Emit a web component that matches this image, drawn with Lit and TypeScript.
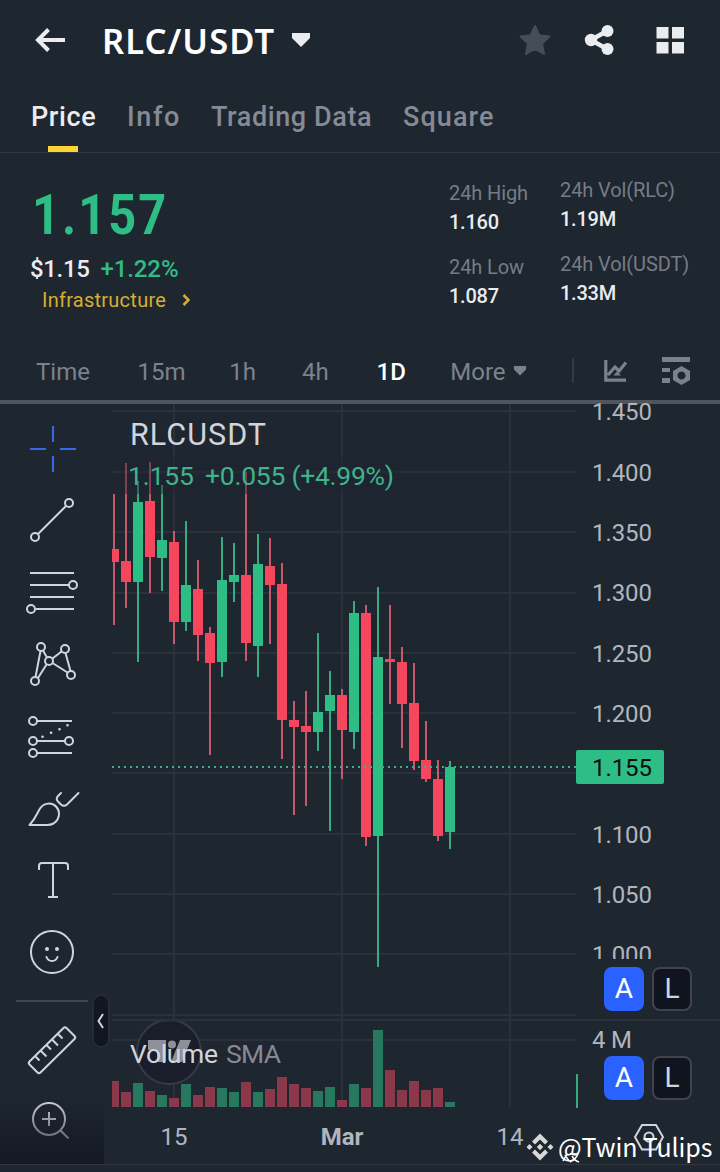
import { LitElement, html, svg, css } from "lit";
import { customElement } from "lit/decorators.js";

const UP = "#2ebd85";
const DOWN = "#f6465d";

// x centre, high, low, body top, body bottom, rising?, volume top
type Candle = [number, number, number, number, number, boolean, number];
const CANDLES: Candle[] = [
  [114, 494, 625, 549, 562, false, 1081],
  [126, 463, 608, 561, 582, false, 1092],
  [138, 481, 662, 502, 582, true, 1083],
  [150, 462, 593, 501, 557, false, 1091],
  [162, 485, 591, 540, 558, true, 1095],
  [174, 531, 644, 542, 622, false, 1098],
  [186, 521, 631, 585, 622, true, 1084],
  [198, 560, 661, 589, 635, false, 1095],
  [210, 627, 755, 633, 663, false, 1087],
  [222, 537, 677, 580, 662, true, 1088],
  [234, 543, 602, 575, 582, true, 1092],
  [246, 472, 661, 575, 643, false, 1082],
  [258, 534, 677, 564, 646, true, 1092],
  [270, 538, 644, 566, 585, false, 1089],
  [282, 563, 759, 584, 720, false, 1077],
  [294, 701, 815, 720, 727, false, 1084],
  [306, 691, 806, 726, 732, false, 1088],
  [318, 633, 751, 712, 732, true, 1091],
  [330, 671, 831, 695, 711, true, 1087],
  [342, 689, 779, 695, 730, false, 1100],
  [354, 601, 749, 613, 732, true, 1084],
  [366, 605, 846, 613, 837, false, 1088],
  [378, 587, 967, 657, 836, true, 1030],
  [390, 605, 704, 659, 662, false, 1070],
  [402, 647, 748, 662, 704, false, 1090],
  [414, 663, 770, 703, 761, false, 1081],
  [426, 721, 782, 760, 779, false, 1090],
  [438, 760, 841, 779, 836, false, 1088],
  [450, 761, 849, 767, 832, true, 1102],
];

const H_GRID = [411, 472, 532, 593, 653, 713, 773, 834, 894, 954, 1015, 1040];
const V_GRID = [174, 342, 510];
const PRICES: [string, number][] = [
  ["1.450", 420], ["1.400", 481], ["1.350", 541], ["1.300", 601],
  ["1.250", 662], ["1.200", 722], ["1.100", 843], ["1.050", 903], ["1.000", 963],
];

@customElement("price-chart")
class PriceChart extends LitElement {
  static styles = css`
    :host { display: block; position: relative; width: 616px; height: 760px; }
    svg { display: block; overflow: visible; }
    text { font-family: Roboto, sans-serif; }
    .axis { font-size: 24px; fill: #b2b5be; }
    .bold { font-weight: 700; }
    .symbol { font-size: 30.5px; fill: #d1d4dc; }
    .change { font-size: 26.5px; fill: #3fb488; }
    .pane { font-size: 26.5px; fill: #d1d4dc; }
    .muted { fill: #868993; }
    .current { fill: #0b0e11; }
    .scales { position: absolute; left: 500px; display: flex; gap: 8px; }
    .upper { top: 563px; }
    .lower { top: 652px; }
    .scale {
      box-sizing: border-box; width: 40px; height: 44px; border: 2px solid #40434d;
      border-radius: 8px; background: #10141f; color: #d1d4dc; padding: 0;
      font: 28px/40px Roboto, sans-serif; text-align: center;
    }
    .on { background: #2962ff; border-color: #2962ff; color: #fff; }
  `;

  render() {
    return html`
      <svg width="616" height="760" viewBox="104 404 616 760">
        <defs>
          <clipPath id="plot"><rect x="112" y="404" width="464" height="703" /></clipPath>
          <clipPath id="lastTick"><rect x="576" y="930" width="144" height="29" /></clipPath>
          <clipPath id="volumePane"><rect x="112" y="1020" width="464" height="88" /></clipPath>
        </defs>
        ${H_GRID.map((y) => svg`<rect x="112" y=${y - 1} width="464" height="2" fill="#2a313b" />`)}
        ${V_GRID.map((x) => svg`<rect x=${x - 1} y="404" width="2" height="703" fill="#2a313b" />`)}
        <rect x="112" y="1019" width="608" height="2" fill="#2a313b" />
        <g clip-path="url(#volumePane)">
          <circle cx="169" cy="1052" r="32" fill="#1a1e2a" stroke="#373b46" stroke-width="2" />
          <path d="M148 1040h18v22h-9v-12h-9zM180 1040h11l-9 22h-11z" fill="#8e9099" />
          <circle cx="172" cy="1044.500" r="4" fill="#8e9099" />
          <rect x="152" y="1020" width="34" height="1.500" fill="#2a313b" />
        </g>
        <g clip-path="url(#plot)">
          ${CANDLES.map(([x, hi, lo, top, bot, up, vol]) => svg`
            <rect x=${x - 5} y=${vol} width="10" height=${1107 - vol} fill=${up ? "#28775f" : "#8b394a"} />
            <rect x=${x - 1} y=${hi} width="2" height=${lo - hi} fill=${up ? "#38ac80" : "#c9586b"} />
            <rect x=${x - 5} y=${top} width="10" height=${bot - top} fill=${up ? UP : DOWN} />`)}
        </g>
        <rect x="120" y="456" width="280" height="38" fill="#1e2630" opacity="0.45" />
        <line x1="112" y1="767" x2="576" y2="767" stroke="#3fae86" stroke-width="2" stroke-dasharray="2 4" />
        <rect x="576" y="1074" width="2" height="34" fill="#38ac80" />
        <text class="symbol" x="130" y="445" textLength="136">RLCUSDT</text>
        <text class="change" x="128" y="485" textLength="66">1.155</text>
        <text class="change" x="205" y="485" textLength="189">+0.055 (+4.99%)</text>
        <text class="pane" x="130" y="1063" textLength="88">Volume</text>
        <text class="pane muted" x="226" y="1063" textLength="55">SMA</text>
        ${PRICES.map(([t, y]) => svg`<text class="axis" x="592" y=${y} textLength="60" clip-path=${y > 950 ? "url(#lastTick)" : "none"}>${t}</text>`)}
        <rect x="576" y="750" width="88" height="34" rx="2" fill=${UP} />
        <text class="axis current" x="592" y="776" textLength="60">1.155</text>
        <text class="axis" x="592" y="1048" textLength="40">4 M</text>
        <text class="axis" x="174" y="1145" text-anchor="middle">15</text>
        <text class="axis bold" x="342" y="1145" text-anchor="middle">Mar</text>
        <text class="axis" x="510" y="1145" text-anchor="middle">14</text>
        <g fill="none" stroke="#d1d4dc" stroke-width="2">
          <path d="M642 1125h14l7 12-7 12.500h-14l-7-12.500z" />
          <circle cx="649" cy="1137" r="4.500" />
        </g>
      </svg>
      <div class="scales upper"><button class="scale on">A</button><button class="scale">L</button></div>
      <div class="scales lower"><button class="scale on">A</button><button class="scale">L</button></div>
    `;
  }
}

const TOOLS = [
  svg`<path stroke="#3a66e8" d="M53 426v16M53 456v16M30 449h16M60 449h16" />`,
  svg`<path d="M38 534l28-28" /><circle cx="69" cy="503" r="4" /><circle cx="35" cy="537" r="4" />`,
  svg`<path d="M30 573h44M30 585h39M30 597h44M36 609h38" /><circle cx="73" cy="585" r="4" /><circle cx="31" cy="609" r="4" />`,
  svg`<path d="M40.500 651l-5 26M43 650.500l4 7M38 678l8.500-13.500M52.500 658.500l9-7M65.500 653l5 18M52.500 663l15 9.500" />
      <circle cx="41" cy="647" r="4" /><circle cx="65" cy="649" r="4" /><circle cx="49" cy="661" r="4" />
      <circle cx="35" cy="681" r="4" /><circle cx="71" cy="675" r="4" />`,
  svg`<path d="M37 721h35M37 741h28M37 753h35" /><circle cx="33" cy="721" r="4" /><circle cx="33" cy="741" r="4" />
      <circle cx="69" cy="741" r="4" /><circle cx="33" cy="753" r="4" />
      <path stroke-linecap="round" stroke-width="2.600" d="M42.500 736.800h.1M51 732.800h.1M59.500 729.300h.1M67.500 725.300h.1" />`,
  svg`<path stroke-linejoin="round" d="M29.500 825C36 818 37 813 40 808.500C44 802.500 52 802 56.500 807C61 812.500 59 820 53.500 823.500C51.500 824.600 49.500 825 47 825z" />
      <path stroke-linecap="round" d="M61 793l-3 3q-2.500 3 0 5.500l3 3q3 2.500 6 0l11.500-11.500" />`,
  svg`<path d="M39 870v-4q0-3 3-3h23q3 0 3 3v4M53 863v34M48 897h10" />`,
  svg`<circle cx="52" cy="952" r="21" /><path stroke-linecap="round" d="M46.500 957q1.500 4 5.500 4t5.500-4" />
      <circle cx="47" cy="949" r="2" fill="#d1d4dc" stroke="none" /><circle cx="57" cy="949" r="2" fill="#d1d4dc" stroke="none" />`,
];

@customElement("drawing-toolbar")
class DrawingToolbar extends LitElement {
  static styles = css`
    :host {
      box-sizing: border-box; display: flex; flex-direction: column; position: relative;
      width: 104px; height: 760px; padding-top: 9px;
    }
    svg { display: block; flex: none; fill: none; stroke: #d1d4dc; stroke-width: 2; }
    .rule { height: 2px; margin: 11px 16px; background: #40444f; }
    .fade {
      position: absolute; left: 0; bottom: 0; width: 104px; height: 66px;
      background: linear-gradient(rgba(19, 23, 34, 0), rgba(19, 23, 34, 0.9));
    }
    .collapse {
      position: absolute; left: 92px; top: 590px; width: 14px; height: 50px; z-index: 1;
      border: 2px solid #262b36; border-radius: 9px; background: #121622;
    }
  `;

  render() {
    return html`
      ${TOOLS.map((t, i) => html`<svg width="104" height="72" viewBox="0 ${413 + i * 72} 104 72">${t}</svg>`)}
      <div class="rule"></div>
      <svg width="104" height="72" viewBox="0 1013 104 72">
        <path stroke-linejoin="round" d="M63.500 1028q1.500-1.500 3 0l8 8q1.500 1.500 0 3l-34 33.500q-1.500 1.500-3 0l-8-8q-1.500-1.500 0-3zM35 1056l4.500 4.500M40.500 1050.500l6 6M46.500 1045l4.500 4.500M52 1039.500l6 6M58 1034l4.500 4.500" />
      </svg>
      <svg width="104" height="72" viewBox="0 1085 104 72">
        <circle cx="49" cy="1119" r="16" /><path d="M42 1119h14M49 1112v14M60.500 1130.500l8 8" />
      </svg>
      <div class="fade"></div>
      <div class="collapse">
        <svg width="14" height="50" viewBox="94 996 14 50"><path d="M103 1014l-4.500 7 4.500 7" /></svg>
      </div>
    `;
  }
}

@customElement("app-root")
class AppRoot extends LitElement {
  static styles = css`
    :host {
      display: block; position: relative; width: 720px; height: 1172px; overflow: hidden;
      background: #1e2630; color: #eaecef; font-family: Roboto, sans-serif;
    }
    svg { display: block; flex: none; }
    .header { display: flex; align-items: center; height: 80px; padding: 0 35px 0 34px; }
    .pair { margin: 2px 17px 0 36px; font: 600 34.500px/40px "Noto Sans", sans-serif; width: 172px; color: #fff; white-space: nowrap; letter-spacing: 1.05px; }
    .spacer { flex: 1; }
    .actions { display: flex; align-items: center; gap: 33px; }
    .tabs {
      box-sizing: border-box; display: flex; height: 73px; padding-left: 31px; gap: 31px;
      border-bottom: 1px solid #333941; font: 500 27px/74px Roboto, sans-serif; color: #858a95;
    }
    .tab { position: relative; height: 72px; white-space: nowrap; }
    .active { color: #eaecef; }
    .active::after {
      content: ""; position: absolute; left: 17px; bottom: 0; width: 30px; height: 6px; background: #fcd535;
    }
    .t1 { width: 65px; letter-spacing: 0.6px; }
    .t2 { width: 53px; letter-spacing: 1.6px; }
    .t3 { width: 161px; letter-spacing: 0.6px; }
    .t4 { letter-spacing: 1.1px; }
    .ticker { display: flex; height: 187px; }
    .quote { width: 449px; box-sizing: border-box; padding: 29px 0 0 30px; }
    .last { height: 70px; font: 700 56px/66px Roboto, sans-serif; letter-spacing: 2.4px; transform: translateX(2px) scaleX(0.87); transform-origin: left; }
    .fiat { display: flex; gap: 11px; height: 32px; font: 500 24px/34px Roboto, sans-serif; letter-spacing: -0.35px; }
    .green { color: #2ebd85; }
    .fiat .green { letter-spacing: -0.1px; }
    .sector { display: flex; align-items: center; gap: 16px; height: 32px; padding-left: 12px; font-size: 20px; letter-spacing: 0.25px; color: #d8ae30; }
    .stats { display: grid; grid-template-columns: 111px auto; align-content: start; row-gap: 16px; padding-top: 23px; }
    .stat { font: 20px/29px Roboto, sans-serif; letter-spacing: -0.1px; color: #767c87; white-space: nowrap; }
    .stat b { display: block; font-weight: 500; letter-spacing: -0.25px; color: #eaecef; }
    .low { padding-top: 3px; margin-bottom: -3px; }
    .intervals {
      box-sizing: border-box; display: flex; align-items: center; height: 64px; padding: 3px 29px 0 36px;
      border-bottom: 4px solid #51565e; font-size: 24px; letter-spacing: 0; color: #7c828d;
    }
    .i1 { width: 102px; } .i2 { width: 92px; } .i3 { width: 73px; } .i4 { width: 75px; }
    .i5 { width: 74px; color: #fff; font-weight: 500; } .i6 { width: 63px; }
    .divider { width: 2px; height: 25px; margin: 0 30px 3px 45px; background: #343a44; }
    .prefs { margin-left: 34px; }
    .chart { display: flex; height: 760px; border-bottom: 1px solid #343842; }
    .credit {
      position: absolute; left: 526px; top: 1131px; display: flex; align-items: center; gap: 4px;
      font: 400 25px/34px "Noto Sans CJK SC", "Noto Sans", sans-serif; color: #fff; white-space: nowrap;
    }
    .handle { letter-spacing: -0.1px; margin-top: -2px; }
    .stamp { position: absolute; left: 35px; top: 21px; }
  `;

  render() {
    return html`
      <header class="header">
        <svg width="32" height="28" viewBox="34 26 32 28" fill="none" stroke="#eaecef" stroke-width="4">
          <path d="M65 40H38M48.500 29.500L38 40l10.500 10.500" />
        </svg>
        <div class="pair">RLC/USDT</div>
        <svg width="20" height="16" viewBox="291 32 20 16"><path d="M292 33h18v5l-9 9-9-9z" fill="#eaecef" /></svg>
        <div class="spacer"></div>
        <div class="actions">
          <svg width="32" height="32" viewBox="519 24 32 32">
            <path d="M535 26l4.300 9.200 10.200 1.300-7.500 7 2 10.500-9-5-9 5 2-10.500-7.500-7 10.200-1.300z" fill="#474d57" stroke="#474d57" stroke-width="2" stroke-linejoin="round" />
          </svg>
          <svg width="30" height="32" viewBox="584 24 30 32" fill="#eaecef">
            <path d="M607 31l-16 9 16 9" fill="none" stroke="#eaecef" stroke-width="4.500" />
            <circle cx="607.500" cy="31" r="6" /><circle cx="591" cy="40" r="6.200" /><circle cx="607.500" cy="49" r="6" />
          </svg>
          <svg width="38" height="28" viewBox="647 26 38 28" fill="#eaecef">
            <path d="M656.500 27h12v11.500h-12zM672 27h12v11.500h-12zM656.500 42h12v11.500h-12zM672 42h12v11.500h-12z" />
          </svg>
        </div>
      </header>
      <nav class="tabs">
        <div class="tab t1 active">Price</div>
        <div class="tab t2">Info</div>
        <div class="tab t3">Trading Data</div>
        <div class="tab t4">Square</div>
      </nav>
      <section class="ticker">
        <div class="quote">
          <div class="last green">1.157</div>
          <div class="fiat"><span>$1.15</span><span class="green">+1.22%</span></div>
          <div class="sector">
            Infrastructure
            <svg width="8" height="14" viewBox="0 0 8 14" fill="none" stroke="#d8ae30" stroke-width="2.600"><path d="M1.500 2l5 5-5 5" /></svg>
          </div>
        </div>
        <div class="stats">
          <div class="stat low">24h High<b>1.160</b></div>
          <div class="stat">24h Vol(RLC)<b>1.19M</b></div>
          <div class="stat low">24h Low<b>1.087</b></div>
          <div class="stat">24h Vol(USDT)<b>1.33M</b></div>
        </div>
      </section>
      <nav class="intervals">
        <span class="i1">Time</span><span class="i2">15m</span><span class="i3">1h</span><span class="i4">4h</span>
        <span class="i5">1D</span><span class="i6">More</span>
        <svg width="14" height="14" viewBox="0 0 14 14"><path d="M1 1h12v3.500L7 10.500 1 4.500z" fill="#7c828d" /></svg>
        <div class="divider"></div>
        <svg width="23" height="24" viewBox="605 359 23 24" fill="none" stroke="#7c828d" stroke-width="3.500">
          <path d="M606.800 359v20.200H627M609 374l7-8 4 4 7-8.500" stroke-width="3.200" /><path d="M614.500 374.500l3.500-4 4 4z" fill="#7c828d" stroke="none" />
        </svg>
        <svg class="prefs" width="30" height="30" viewBox="661 357 30 30" fill="#7c828d">
          <path d="M662 357h28v5h-28zM662 368h8v4h-8zM662 378h8v5h-8z" />
          <path fill-rule="evenodd" d="M681.500 366l8.500 5v9l-8.500 5-8.500-5v-9zM681.500 371.500a4 4 0 1 0 .01 0z" />
        </svg>
      </nav>
      <main class="chart">
        <drawing-toolbar></drawing-toolbar>
        <price-chart></price-chart>
      </main>
      <div class="credit">
        <svg width="28" height="28" viewBox="-14 -14 28 28" fill="#d8d8d8">
          <path d="M0-13.500l8 8-3 3-5-5-5 5-3-3zM0 13.500l8-8-3-3-5 5-5-5-3 3zM0-3.200L3.200 0 0 3.200-3.200 0zM-10.500-3l3 3-3 3-3-3zM10.500-3l3 3-3 3-3-3z" />
        </svg>
        <span class="handle">@Twin Tulips</span>
        <svg class="stamp" width="20" height="11" viewBox="0 0 20 11" fill="none" stroke="#fff" stroke-width="1.500">
          <path d="M2 9l4-7M4 3l4 6M9 2h8q-2 5-8 8M11 4q3 5 7 6" />
        </svg>
      </div>
    `;
  }
}
